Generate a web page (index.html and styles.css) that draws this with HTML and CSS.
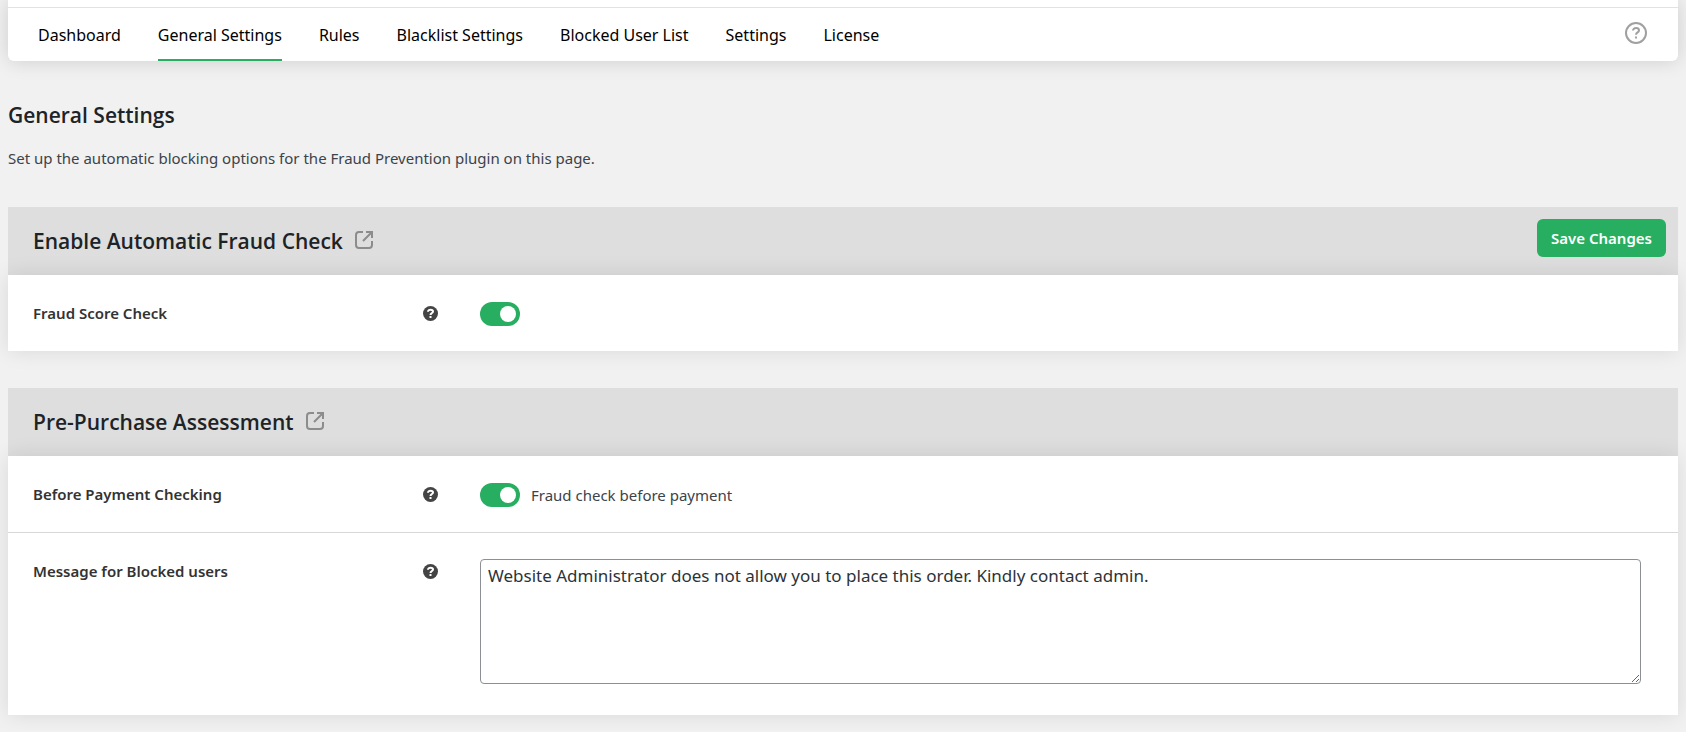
FILE: index.html
```html
<!DOCTYPE html>
<html lang="en">

<head>
    <meta charset="UTF-8">
    <meta name="viewport" content="width=device-width, initial-scale=1.0">
    <title>General Settings</title>
    <link rel="stylesheet" href="styles.css">
</head>

<body>
    <header class="plugin-header">
        <nav class="plugin-nav">
            <a href="#">Dashboard</a>
            <a href="#" class="active">General Settings</a>
            <a href="#">Rules</a>
            <a href="#">Blacklist Settings</a>
            <a href="#">Blocked User List</a>
            <a href="#">Settings</a>
            <a href="#">License</a>
        </nav>
        <a href="#" class="header-help" aria-label="Help">
            <svg width="22" height="22" viewBox="0 0 22 22" fill="none" stroke="#a0a0a0" stroke-width="2">
                <circle cx="11" cy="11" r="10" />
                <path d="M8 8.6C8 6.9 9.3 6 11 6s3 .9 3 2.4c0 1.900-3 2.100-3 4.300" />
                <path d="M11 14.500v2" />
            </svg>
        </a>
    </header>

    <main>
        <h1>General Settings</h1>
        <p class="description">Set up the automatic blocking options for the Fraud Prevention plugin on this page.</p>

        <form>
            <section class="card">
                <div class="card-header">
                    <h2>Enable Automatic Fraud Check</h2>
                    <a href="#" class="external" aria-label="Open documentation">
                        <svg width="18" height="18" viewBox="0 0 18 18" fill="none" stroke="#8c8c8c" stroke-width="2">
                            <path d="M8 1H4a3 3 0 0 0-3 3v10a3 3 0 0 0 3 3h10a3 3 0 0 0 3-3v-4" />
                            <path d="M11 1h6v6M17 1L8 10" />
                        </svg>
                    </a>
                    <button type="submit" class="save-btn">Save Changes</button>
                </div>
                <div class="card-body">
                    <div class="row">
                        <label for="score-check">Fraud Score Check</label>
                        <button type="button" class="tip" aria-label="More info">
                            <svg width="15" height="15" viewBox="0 0 15 15" fill="none" stroke="#fff" stroke-width="2">
                                <circle cx="7.500" cy="7.500" r="7.500" fill="#444" stroke="none" />
                                <path d="M5 5.800C5 4.400 6.100 3.800 7.500 3.800s2.500.7 2.500 1.800C10 7 7.500 7 7.500 9M7.500 10v2" />
                            </svg>
                        </button>
                        <div class="control">
                            <input type="checkbox" id="score-check" class="toggle" checked>
                        </div>
                    </div>
                </div>
            </section>

            <section class="card">
                <div class="card-header">
                    <h2>Pre-Purchase Assessment</h2>
                    <a href="#" class="external" aria-label="Open documentation">
                        <svg width="18" height="18" viewBox="0 0 18 18" fill="none" stroke="#8c8c8c" stroke-width="2">
                            <path d="M8 1H4a3 3 0 0 0-3 3v10a3 3 0 0 0 3 3h10a3 3 0 0 0 3-3v-4" />
                            <path d="M11 1h6v6M17 1L8 10" />
                        </svg>
                    </a>
                </div>
                <div class="card-body">
                    <div class="row">
                        <label for="payment-check">Before Payment Checking</label>
                        <button type="button" class="tip" aria-label="More info">
                            <svg width="15" height="15" viewBox="0 0 15 15" fill="none" stroke="#fff" stroke-width="2">
                                <circle cx="7.500" cy="7.500" r="7.500" fill="#444" stroke="none" />
                                <path d="M5 5.800C5 4.400 6.100 3.800 7.500 3.800s2.500.7 2.500 1.800C10 7 7.500 7 7.500 9M7.500 10v2" />
                            </svg>
                        </button>
                        <div class="control">
                            <input type="checkbox" id="payment-check" class="toggle" aria-describedby="payment-note" checked>
                            <span id="payment-note">Fraud check before payment</span>
                        </div>
                    </div>
                    <div class="row">
                        <label for="message">Message for Blocked users</label>
                        <button type="button" class="tip" aria-label="More info">
                            <svg width="15" height="15" viewBox="0 0 15 15" fill="none" stroke="#fff" stroke-width="2">
                                <circle cx="7.500" cy="7.500" r="7.500" fill="#444" stroke="none" />
                                <path d="M5 5.800C5 4.400 6.100 3.800 7.500 3.800s2.500.7 2.500 1.800C10 7 7.500 7 7.500 9M7.500 10v2" />
                            </svg>
                        </button>
                        <div class="control">
                            <textarea id="message">Website Administrator does not allow you to place this order. Kindly contact admin.</textarea>
                        </div>
                    </div>
                </div>
            </section>
        </form>
    </main>
</body>

</html>
```
FILE: styles.css
```css
* {
    margin: 0;
    padding: 0;
    box-sizing: border-box;
}

body {
    font-family: "Segoe UI", "Noto Sans", sans-serif;
    font-size: 15px;
    line-height: 24px;
    color: #3c434a;
    background-color: #f1f1f1;
    padding: 0 8px 16px;
}

.plugin-header {
    display: flex;
    justify-content: space-between;
    padding: 0 31px 0 30px;
    background-color: #fff;
    border-radius: 0 0 6px 6px;
    box-shadow: 0 0 20px rgba(0, 0, 0, 0.15);
    position: relative;
}

/* divider under the plugin title bar */
.plugin-header::before {
    content: "";
    position: absolute;
    top: 7px;
    left: 0;
    right: 0;
    border-top: 1px solid #e2e2e2;
}

.plugin-nav {
    display: flex;
    gap: 37px;
}

.plugin-nav a {
    padding: 23px 0 12px;
    font-size: 16px;
    color: #000;
    text-decoration: none;
    border-bottom: 2px solid transparent;
}

.plugin-nav a.active {
    border-bottom-color: #27ae60;
}

.header-help {
    padding-top: 22px;
}

svg {
    display: block;
}

h1,
h2 {
    font-family: "Segoe UI", "Open Sans", sans-serif;
    font-size: 21px;
    font-weight: 600;
    line-height: 32px;
    color: #1d2327;
}

h1 {
    margin-top: 38px;
}

.description {
    margin-top: 15px;
}

.card {
    margin-top: 37px;
}

.card-header {
    display: flex;
    align-items: center;
    gap: 12px;
    min-height: 68px;
    padding: 0 12px 0 25px;
    background-color: #dedede;
}

.external {
    padding-bottom: 2px;
}

.save-btn {
    margin: 0 0 6px auto;
    height: 38px;
    padding: 0 14px;
    font: inherit;
    font-weight: 600;
    color: #fff;
    background-color: #27ae60;
    border: none;
    border-radius: 6px;
    cursor: pointer;
}

.card-body {
    background-color: #fff;
    box-shadow: 0 0 20px rgba(0, 0, 0, 0.1);
}

.row {
    display: grid;
    grid-template-columns: 390px 15px 1fr;
    padding: 26px 37px 25px 25px;
}

.row + .row {
    padding-bottom: 31px;
    border-top: 1px solid #d8d8d8;
}

.row label {
    font-weight: 600;
    color: #333;
}

.tip {
    height: 15px;
    margin-top: 5px;
    background: none;
    border: none;
    cursor: pointer;
}

.control {
    display: flex;
    align-items: center;
    gap: 11px;
    margin-left: 42px;
}

.toggle {
    appearance: none;
    width: 40px;
    height: 24px;
    margin-top: 1px;
    padding: 4px;
    border-radius: 12px;
    background-color: #ccc;
    cursor: pointer;
}

.toggle::before {
    content: "";
    display: block;
    width: 16px;
    height: 16px;
    border-radius: 50%;
    background-color: #fff;
}

.toggle:checked {
    background-color: #27ae60;
}

.toggle:checked::before {
    margin-left: 16px;
}

textarea {
    display: block;
    width: 100%;
    height: 125px;
    padding: 3px 7px;
    font: inherit;
    font-size: 17px;
    line-height: 26px;
    color: #2c3338;
    background-color: #fff;
    border: 1px solid #8c8f94;
    border-radius: 4px;
    resize: both;
}
```
